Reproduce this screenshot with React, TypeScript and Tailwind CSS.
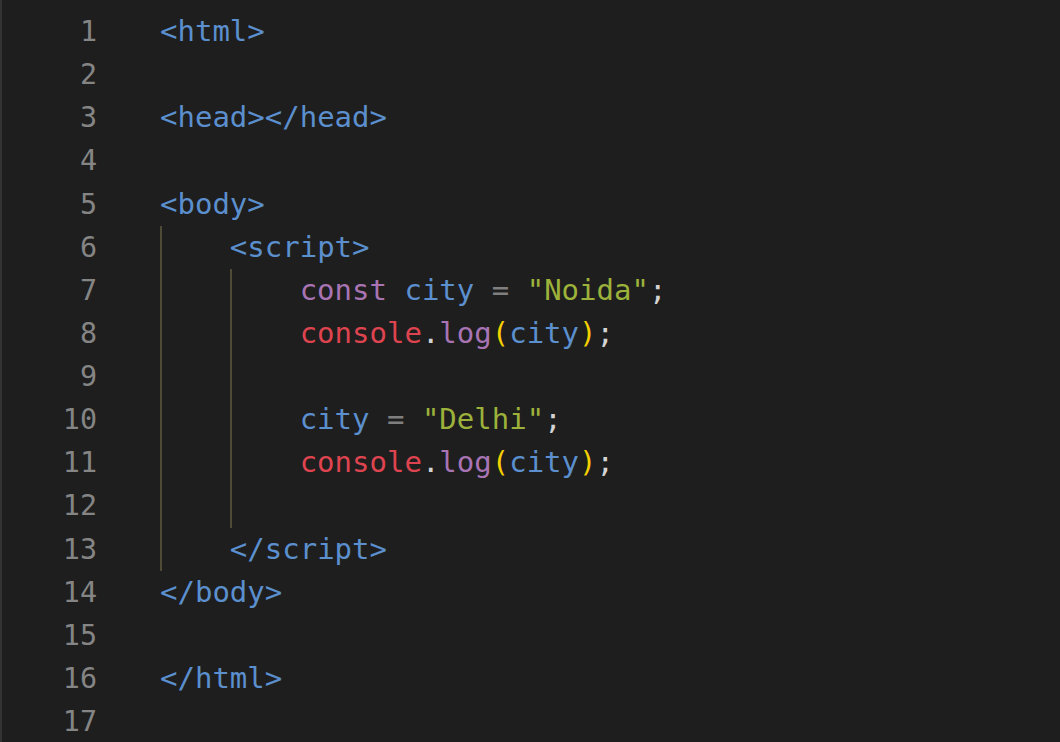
import React from "react";

type Tok = [string, string];

const C = {
  tag: "text-[#5b8fcd]",
  kw: "text-[#a874b4]",
  vr: "text-[#5b8fcd]",
  op: "text-[#7f7f7f]",
  str: "text-[#9cb23a]",
  pun: "text-[#d4d4d4]",
  obj: "text-[#de444f]",
  fn: "text-[#a874b4]",
  par: "text-[#f5d000]",
};

const lines: { guides: number; toks: Tok[] }[] = [
  { guides: 0, toks: [[C.tag, "<html>"]] },
  { guides: 0, toks: [] },
  { guides: 0, toks: [[C.tag, "<head></head>"]] },
  { guides: 0, toks: [] },
  { guides: 0, toks: [[C.tag, "<body>"]] },
  { guides: 1, toks: [[C.tag, "<script>"]] },
  {
    guides: 2,
    toks: [
      [C.kw, "const"],
      [C.pun, " "],
      [C.vr, "city"],
      [C.pun, " "],
      [C.op, "="],
      [C.pun, " "],
      [C.str, '"Noida"'],
      [C.pun, ";"],
    ],
  },
  {
    guides: 2,
    toks: [
      [C.obj, "console"],
      [C.pun, "."],
      [C.fn, "log"],
      [C.par, "("],
      [C.vr, "city"],
      [C.par, ")"],
      [C.pun, ";"],
    ],
  },
  { guides: 2, toks: [] },
  {
    guides: 2,
    toks: [
      [C.vr, "city"],
      [C.pun, " "],
      [C.op, "="],
      [C.pun, " "],
      [C.str, '"Delhi"'],
      [C.pun, ";"],
    ],
  },
  {
    guides: 2,
    toks: [
      [C.obj, "console"],
      [C.pun, "."],
      [C.fn, "log"],
      [C.par, "("],
      [C.vr, "city"],
      [C.par, ")"],
      [C.pun, ";"],
    ],
  },
  { guides: 2, toks: [] },
  { guides: 1, toks: [[C.tag, "</script>"]] },
  { guides: 0, toks: [[C.tag, "</body>"]] },
  { guides: 0, toks: [] },
  { guides: 0, toks: [[C.tag, "</html>"]] },
  { guides: 0, toks: [] },
];

const levels = [0, 0, 0, 0, 0, 1, 2, 2, 2, 2, 2, 2, 1, 0, 0, 0, 0];

export default function App() {
  return (
    <div
      className="w-[1060px] h-[742px] overflow-hidden bg-[#1e1e1e] border-l-2 border-[#333333] pt-[10px]"
      style={{ fontFamily: '"DejaVu Sans Mono", "Liberation Mono", monospace' }}
    >
      {lines.map((ln, i) => {
        const lvl = levels[i];
        return (
          <div key={i} className="flex h-[43.125px] leading-[43.125px] whitespace-pre">
            <div className="w-[95px] text-right text-[#858585] text-[28.4px] shrink-0">{i + 1}</div>
            <div className="w-[63px] shrink-0" />
            <div className="flex text-[29px]">
              {Array.from({ length: lvl }).map((_, g) => (
                <span
                  key={g}
                  className={
                    g < ln.guides
                      ? "inline-block h-full w-[4ch] border-l-2 border-[#4d4b35]"
                      : "inline-block h-full w-[4ch]"
                  }
                />
              ))}
              {ln.toks.length === 0 &&
                Array.from({ length: Math.max(0, ln.guides - lvl) }).map((_, g) => (
                  <span key={"e" + g} className="inline-block h-full w-[4ch] border-l-2 border-[#4d4b35]" />
                ))}
              <span>
                {ln.toks.map((t, k) => (
                  <span key={k} className={t[0]}>
                    {t[1]}
                  </span>
                ))}
              </span>
            </div>
          </div>
        );
      })}
    </div>
  );
}
